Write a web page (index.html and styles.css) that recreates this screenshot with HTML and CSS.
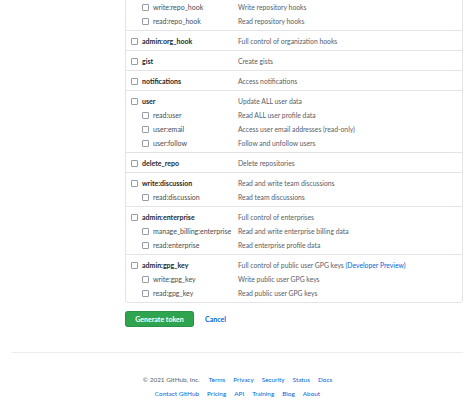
FILE: index.html
```html
<!DOCTYPE html>
<html lang="en">
<head>
<meta charset="utf-8">
<title>New personal access token</title>
<link rel="stylesheet" href="styles.css">
</head>
<body>
<div class="page">
  <div class="scopes">
    <div class="group">
      <div class="row main"><label class="lbl"><span class="cb"></span>admin:repo_hook</label><span class="desc">Full control of repository hooks</span></div>
      <div class="row sub"><label class="lbl"><span class="cb"></span>write:repo_hook</label><span class="desc">Write repository hooks</span></div>
      <div class="row sub"><label class="lbl"><span class="cb"></span>read:repo_hook</label><span class="desc">Read repository hooks</span></div>
    </div>
    <div class="group">
      <div class="row main"><label class="lbl"><span class="cb"></span>admin:org_hook</label><span class="desc">Full control of organization hooks</span></div>
    </div>
    <div class="group">
      <div class="row main"><label class="lbl"><span class="cb"></span>gist</label><span class="desc">Create gists</span></div>
    </div>
    <div class="group">
      <div class="row main"><label class="lbl"><span class="cb"></span>notifications</label><span class="desc">Access notifications</span></div>
    </div>
    <div class="group">
      <div class="row main"><label class="lbl"><span class="cb"></span>user</label><span class="desc">Update ALL user data</span></div>
      <div class="row sub"><label class="lbl"><span class="cb"></span>read:user</label><span class="desc">Read ALL user profile data</span></div>
      <div class="row sub"><label class="lbl"><span class="cb"></span>user:email</label><span class="desc">Access user email addresses (read-only)</span></div>
      <div class="row sub"><label class="lbl"><span class="cb"></span>user:follow</label><span class="desc">Follow and unfollow users</span></div>
    </div>
    <div class="group">
      <div class="row main"><label class="lbl"><span class="cb"></span>delete_repo</label><span class="desc">Delete repositories</span></div>
    </div>
    <div class="group">
      <div class="row main"><label class="lbl"><span class="cb"></span>write:discussion</label><span class="desc">Read and write team discussions</span></div>
      <div class="row sub"><label class="lbl"><span class="cb"></span>read:discussion</label><span class="desc">Read team discussions</span></div>
    </div>
    <div class="group">
      <div class="row main"><label class="lbl"><span class="cb"></span>admin:enterprise</label><span class="desc">Full control of enterprises</span></div>
      <div class="row sub"><label class="lbl"><span class="cb"></span>manage_billing:enterprise</label><span class="desc">Read and write enterprise billing data</span></div>
      <div class="row sub"><label class="lbl"><span class="cb"></span>read:enterprise</label><span class="desc">Read enterprise profile data</span></div>
    </div>
    <div class="group">
      <div class="row main"><label class="lbl"><span class="cb"></span>admin:gpg_key</label><span class="desc">Full control of public user GPG keys <a class="link" href="#">(Developer Preview)</a></span></div>
      <div class="row sub"><label class="lbl"><span class="cb"></span>write:gpg_key</label><span class="desc">Write public user GPG keys</span></div>
      <div class="row sub"><label class="lbl"><span class="cb"></span>read:gpg_key</label><span class="desc">Read public user GPG keys</span></div>
    </div>
  </div>
  <div class="actions">
    <button class="btn-primary" type="button">Generate token</button>
    <a class="cancel" href="#">Cancel</a>
  </div>
</div>
<footer class="footer">
  <div class="footer-line">
    <span class="copy">© 2021 GitHub, Inc.</span>
    <a href="#">Terms</a>
    <a href="#">Privacy</a>
    <a href="#">Security</a>
    <a href="#">Status</a>
    <a href="#">Docs</a>
  </div>
  <div class="footer-line">
    <a href="#">Contact GitHub</a>
    <a href="#">Pricing</a>
    <a href="#">API</a>
    <a href="#">Training</a>
    <a href="#">Blog</a>
    <a href="#">About</a>
  </div>
</footer>
</body>
</html>
```

FILE: styles.css
```css
html, body {
  margin: 0;
  padding: 0;
  background: #ffffff;
}
body {
  font-family: Lato, "Noto Sans", sans-serif;
  font-size: 7px;
  color: #24292e;
  overflow: hidden;
}
.page {
  padding-left: 125px;
  width: 338px;
}
.scopes {
  margin-top: -18px;
  border: 1px solid #e1e4e8;
  border-radius: 3px;
}
.group {
  padding: 3px 0 2px;
  border-top: 1px solid #e1e4e8;
}
.group:first-child {
  border-top: none;
}
.row {
  display: grid;
  height: 14px;
  align-items: center;
  white-space: nowrap;
  line-height: 14px;
}
.row.main { padding-left: 5px; grid-template-columns: 107px 1fr; }
.row.sub { padding-left: 16px; grid-template-columns: 96px 1fr; }
.lbl {
  display: flex;
  align-items: center;
}
.main .lbl { font-weight: 700; color: #24292e; }
.sub .lbl { color: #444d56; }
.cb {
  width: 5px;
  height: 5px;
  border: 1px solid #959da5;
  border-radius: 1px;
  margin-right: 4px;
  background: #fff;
  flex: none;
}
.desc { color: #586069; font-size: 6.8px; }
.link { color: #0366d6; text-decoration: none; }
.actions {
  display: flex;
  align-items: center;
  gap: 11px;
  margin-top: 8px;
  height: 16px;
}
.btn-primary {
  font-family: inherit;
  font-size: 7px;
  font-weight: 700;
  color: #fff;
  background: #2ea44f;
  border: 1px solid rgba(27, 31, 35, 0.15);
  border-radius: 3px;
  height: 16px;
  width: 69px;
  padding: 0;
  line-height: 14px;
}
.cancel {
  color: #0366d6;
  font-weight: 700;
  text-decoration: none;
}
.footer {
  margin: 25px 11px 0 12px;
  border-top: 1px solid #eaecef;
  padding-top: 19px;
  text-align: center;
  font-size: 6.4px;
}
.footer-line {
  display: flex;
  justify-content: center;
  gap: 8px;
  height: 14px;
  align-items: center;
}
.footer a { color: #0366d6; text-decoration: none; }
.copy { color: #586069; margin-right: 1px; }
```
